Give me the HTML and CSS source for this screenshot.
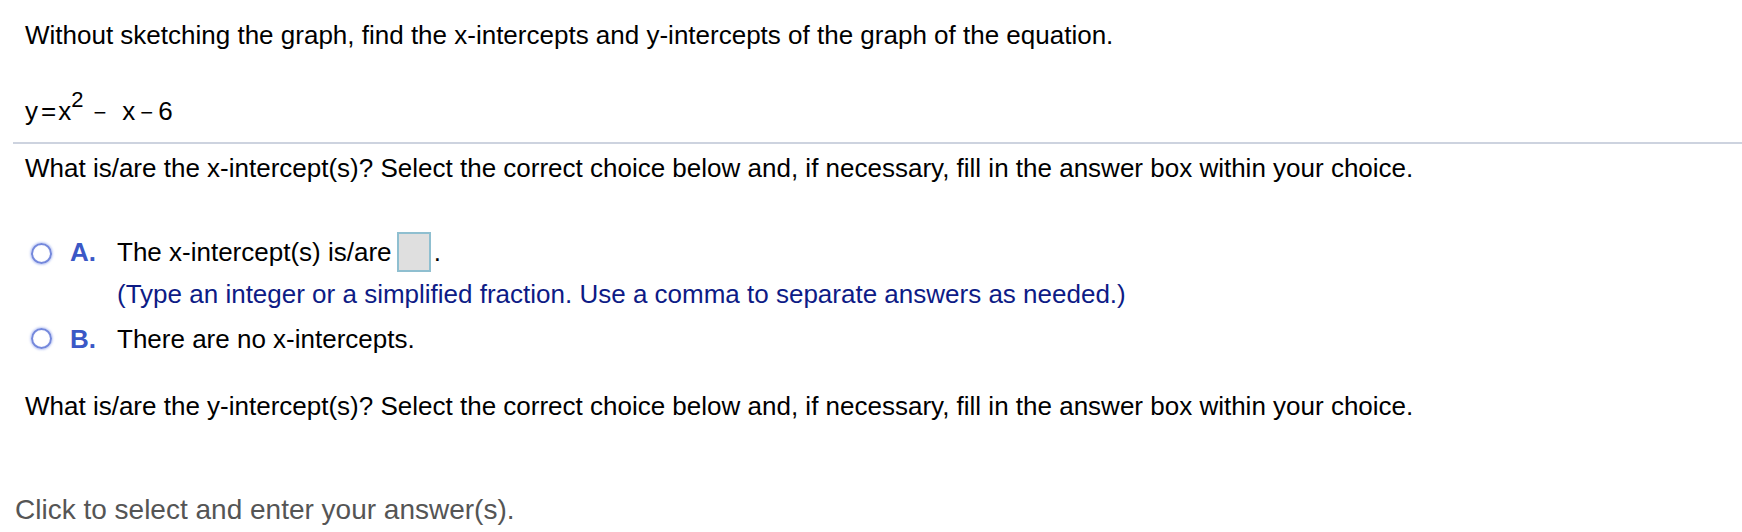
FILE: index.html
```html
<!DOCTYPE html>
<html>
<head>
<meta charset="utf-8">
<link rel="stylesheet" href="styles.css">
</head>
<body>
<div class="page">
  <p class="title">Without sketching the graph, find the x-intercepts and y-intercepts of the graph of the equation.</p>
  <p class="equation"><span class="v">y</span><span class="eq">=</span><span class="v">x</span><sup class="sup">2</sup><span class="op op1">−</span><span class="v x2">x</span><span class="op op2">−</span><span class="num">6</span></p>
  <div class="divider"></div>
  <p class="question q1">What is/are the x-intercept(s)? Select the correct choice below and, if necessary, fill in the answer box within your choice.</p>
  <div class="choice choice-a">
    <span class="radio"></span>
    <span class="label">A.</span>
    <div class="content">
      <p class="line">The x-intercept(s) is/are <span class="box"></span>.</p>
      <p class="hint">(Type an integer or a simplified fraction. Use a comma to separate answers as needed.)</p>
    </div>
  </div>
  <div class="choice choice-b">
    <span class="radio"></span>
    <span class="label">B.</span>
    <div class="content">
      <p class="line">There are no x-intercepts.</p>
    </div>
  </div>
  <p class="question q2">What is/are the y-intercept(s)? Select the correct choice below and, if necessary, fill in the answer box within your choice.</p>
  <p class="footer">Click to select and enter your answer(s).</p>
</div>
</body>
</html>
```
FILE: styles.css
```css
html, body {
  margin: 0;
  padding: 0;
  background: #ffffff;
}
body {
  font-family: "Liberation Sans", Arial, sans-serif;
  font-size: 26px;
  line-height: 30px;
  color: #000000;
}
p {
  margin: 0;
}
.page {
  padding: 20px 0 0 25px;
}
.title {
  margin: 0;
}
.equation {
  margin-top: 46px;
  white-space: nowrap;
}
.equation .eq {
  margin: 0 2px 0 3px;
}
.equation .sup {
  font-size: 22px;
  line-height: 0;
  vertical-align: 13px;
}
.equation .op {
  font-size: 22px;
}
.equation .op1 {
  margin-left: 10px;
}
.equation .x2 {
  margin-left: 16px;
}
.equation .op2 {
  margin-left: 5px;
}
.equation .num {
  margin-left: 5px;
}
.divider {
  margin-top: 14px;
  margin-left: -12px;
  height: 2px;
  background: #cdd3df;
}
.q1 {
  margin-top: 9px;
}
.choice {
  display: flex;
  align-items: baseline;
  margin-left: 6px;
}
.choice-a {
  margin-top: 49px;
}
.choice-b {
  margin-top: 15px;
}
.radio {
  flex: none;
  align-self: flex-start;
  box-sizing: border-box;
  width: 21px;
  height: 21px;
  border: 2px solid #7488dc;
  border-radius: 50%;
  box-shadow: 0 0 2px 1px rgba(150, 168, 238, 0.55), inset 0 0 1px rgba(150, 168, 238, 0.5);
  margin-right: 18px;
}
.choice-a .radio {
  margin-top: 11px;
}
.choice-b .radio {
  margin-top: 4px;
}
.label {
  flex: none;
  width: 47px;
  font-weight: bold;
  color: #3b58c6;
}
.content .line {
  white-space: nowrap;
}
.box {
  display: inline-block;
  box-sizing: border-box;
  width: 34px;
  height: 40px;
  border: 2px solid #8fbfd0;
  background: #dfdfdf;
  vertical-align: -11px;
  margin: 0 3px 0 -2px;
}
.hint {
  margin-top: 7px;
  color: #0d1b86;
  white-space: nowrap;
}
.q2 {
  margin-top: 37px;
}
.footer {
  margin-top: 73px;
  margin-left: -10px;
  font-size: 28px;
  line-height: 32px;
  color: #555555;
}
```
